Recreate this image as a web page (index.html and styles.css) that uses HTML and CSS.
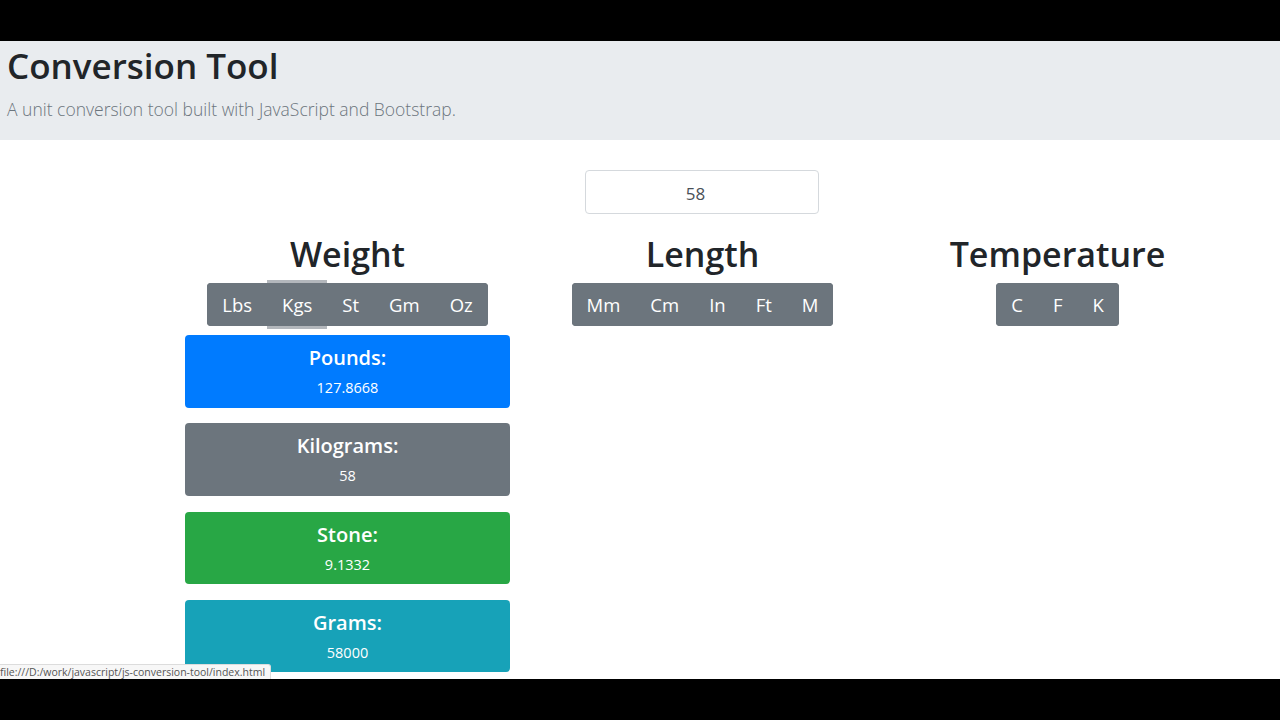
FILE: index.html
```html
<!DOCTYPE html>
<html lang="en">
<head>
  <meta charset="UTF-8">
  <meta name="viewport" content="width=device-width, initial-scale=1.0">
  <title>Conversion Tool</title>
  <link rel="stylesheet" href="styles.css">
</head>
<body>
  <div class="screen">
    <div class="jumbotron">
      <h1>Conversion Tool</h1>
      <p class="lead">A unit conversion tool built with JavaScript and Bootstrap.</p>
    </div>

    <div class="container">
      <div class="input-row">
        <input type="number" id="value" class="form-control" value="58">
      </div>

      <div class="row">
        <div class="col">
          <h2>Weight</h2>
          <div class="btn-group">
            <button class="btn">Lbs</button>
            <button class="btn active">Kgs</button>
            <button class="btn">St</button>
            <button class="btn">Gm</button>
            <button class="btn">Oz</button>
          </div>
          <div class="card bg-primary">
            <h4>Pounds:</h4>
            <div class="value">127.8668</div>
          </div>
          <div class="card bg-secondary">
            <h4>Kilograms:</h4>
            <div class="value">58</div>
          </div>
          <div class="card bg-success">
            <h4>Stone:</h4>
            <div class="value">9.1332</div>
          </div>
          <div class="card bg-info">
            <h4>Grams:</h4>
            <div class="value">58000</div>
          </div>
        </div>

        <div class="col">
          <h2>Length</h2>
          <div class="btn-group">
            <button class="btn">Mm</button>
            <button class="btn">Cm</button>
            <button class="btn">In</button>
            <button class="btn">Ft</button>
            <button class="btn">M</button>
          </div>
        </div>

        <div class="col">
          <h2>Temperature</h2>
          <div class="btn-group">
            <button class="btn">C</button>
            <button class="btn">F</button>
            <button class="btn">K</button>
          </div>
        </div>
      </div>
    </div>

    <div class="status-bar">file:///D:/work/javascript/js-conversion-tool/index.html</div>
  </div>
</body>
</html>
```

FILE: styles.css
```css
body {
  margin: 0;
  background-color: #000;
  font-family: "Open Sans", "Noto Sans", sans-serif;
  color: #212529;
}
.screen {
  position: relative;
  margin-top: 41px;
  height: 638px;
  background-color: #fff;
  overflow: hidden;
}
.jumbotron {
  background-color: #e9ecef;
  height: 99px;
  padding: 0 7px;
  box-sizing: border-box;
}
h1 {
  margin: 0;
  padding-top: 2px;
  font-size: 35px;
  font-weight: 600;
  line-height: 46px;
}
.lead {
  margin: 8px 0 0;
  font-size: 17.5px;
  font-weight: 300;
  color: #6c757d;
}
.container {
  width: 1065px;
  margin-left: 170px;
}
.input-row {
  display: flex;
  justify-content: center;
  padding-top: 30px;
  padding-right: 2px;
}
.form-control {
  width: 234px;
  height: 44px;
  box-sizing: border-box;
  border: 1px solid #d5d9dd;
  border-radius: 4px;
  padding: 3px 12px 0 0;
  font-family: inherit;
  font-size: 17px;
  color: #495057;
  text-align: center;
  -moz-appearance: textfield;
}
.form-control::-webkit-inner-spin-button {
  -webkit-appearance: none;
}
.row {
  display: grid;
  grid-template-columns: repeat(3, 1fr);
  margin-top: 16px;
}
.col {
  display: flex;
  flex-direction: column;
  align-items: center;
  padding: 0 15px;
}
h2 {
  margin: 0 0 5px;
  font-size: 34px;
  font-weight: 600;
  line-height: 48px;
}
.btn-group {
  display: flex;
  background-color: #6c757d;
  border-radius: 4px;
}
.btn {
  height: 43px;
  padding: 0 15px;
  border: none;
  background-color: #6c757d;
  color: #fff;
  font-family: inherit;
  font-size: 18.5px;
  border-radius: 4px;
}
.btn.active {
  border-radius: 0;
  box-shadow: 0 -3px 0 #b3b7bc, 0 3px 0 #b3b7bc;
}
.card {
  width: 100%;
  height: 72.5px;
  margin-top: 15.8px;
  border-radius: 4px;
  color: #fff;
  text-align: center;
  box-sizing: border-box;
  padding-top: 9px;
}
.btn-group + .card {
  margin-top: 9px;
}
.card h4 {
  margin: 0;
  font-size: 20px;
  font-weight: 600;
  line-height: 28px;
}
.card .value {
  margin-top: 6px;
  font-size: 14.5px;
  line-height: 20px;
}
.bg-primary {
  background-color: #007bff;
}
.bg-secondary {
  background-color: #6c757d;
}
.bg-success {
  background-color: #28a745;
}
.bg-info {
  background-color: #17a2b8;
}
.status-bar {
  position: absolute;
  left: 0;
  top: 623px;
  padding: 1px 5px 2px 0;
  background-color: #f7f7f7;
  border: 1px solid #dcdcdc;
  border-left: none;
  border-radius: 0 3px 0 0;
  font-size: 10.5px;
  line-height: 13px;
  color: #555;
  white-space: nowrap;
}
```
